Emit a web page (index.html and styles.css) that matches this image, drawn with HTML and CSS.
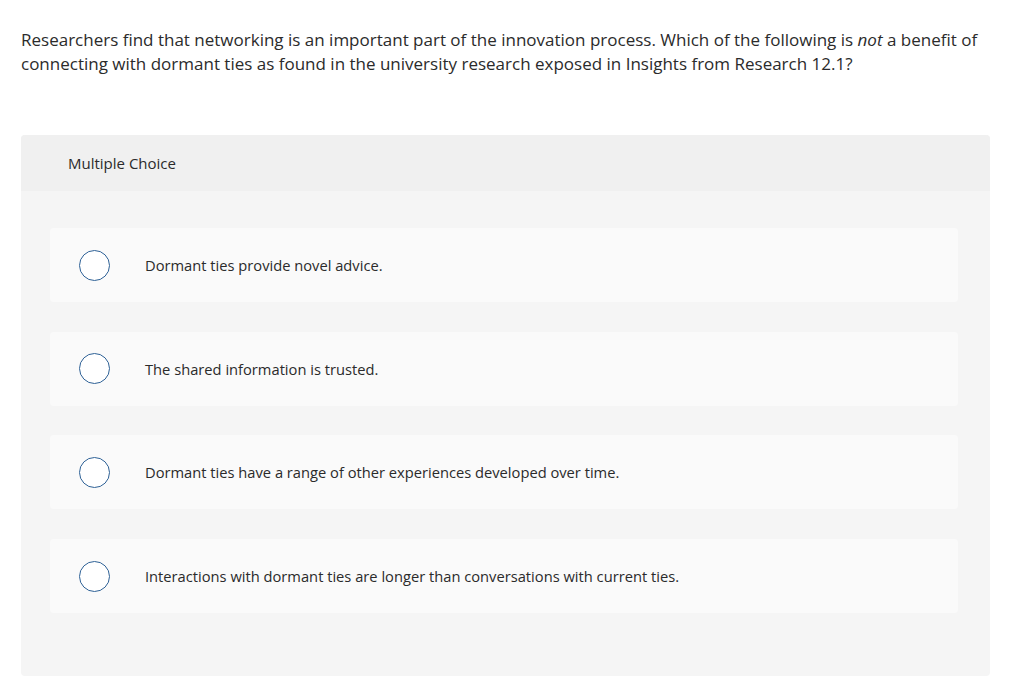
FILE: index.html
```html
<!DOCTYPE html>
<html>
<head>
<meta charset="utf-8">
<link rel="stylesheet" href="styles.css">
</head>
<body>
<div class="page">
  <p class="question">Researchers find that networking is an important part of the innovation process. Which of the following is <em>not</em> a benefit of connecting with dormant ties as found in the university research exposed in Insights from Research 12.1?</p>
  <div class="card">
    <div class="card-header">Multiple Choice</div>
    <div class="card-body">
      <div class="option"><span class="radio"></span><span class="label">Dormant ties provide novel advice.</span></div>
      <div class="option"><span class="radio"></span><span class="label">The shared information is trusted.</span></div>
      <div class="option"><span class="radio"></span><span class="label">Dormant ties have a range of other experiences developed over time.</span></div>
      <div class="option"><span class="radio"></span><span class="label">Interactions with dormant ties are longer than conversations with current ties.</span></div>
    </div>
  </div>
</div>
</body>
</html>
```
FILE: styles.css
```css
* { box-sizing: border-box; }
html, body { margin: 0; padding: 0; background: #fff; }
body {
  font-family: "Open Sans", "Liberation Sans", sans-serif;
  color: #2b2b2b;
}
.page {
  padding: 28px 34px 0 21px;
}
.question {
  margin: 0;
  font-size: 17px;
  line-height: 24px;
}
.question em { font-style: italic; }
.card {
  margin-top: 59px;
  background: #f5f5f5;
  border-radius: 4px;
  overflow: hidden;
}
.card-header {
  background: #f0f0f0;
  height: 56px;
  display: flex;
  align-items: center;
  padding-left: 47px;
  font-size: 15px;
  color: #2b2b2b;
}
.card-body {
  padding: 37px 32px 63px 29px;
  display: flex;
  flex-direction: column;
  gap: 29.7px;
}
.option {
  background: #fafafa;
  border-radius: 4px;
  height: 74px;
  display: flex;
  align-items: center;
  padding-left: 29px;
}
.radio {
  width: 31px;
  height: 31px;
  border: 1.5px solid #2e6196;
  border-radius: 50%;
  background: #fff;
  flex: none;
}
.label {
  margin-left: 35px;
  font-size: 14.7px;
  color: #2b2b2b;
}
```
